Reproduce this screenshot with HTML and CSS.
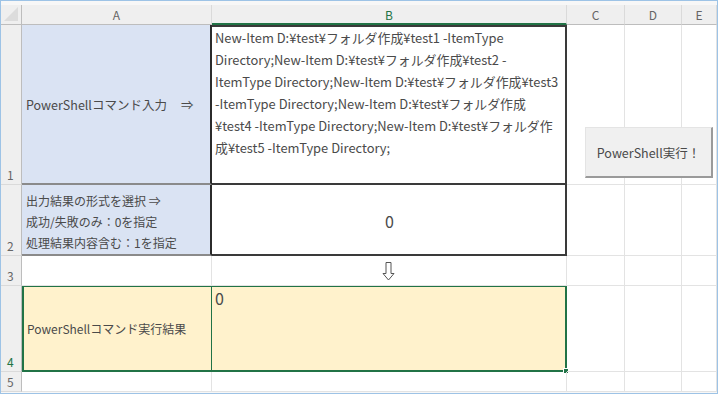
FILE: index.html
```html
<!DOCTYPE html>
<html lang="ja">
<head>
    <meta charset="UTF-8">
    <title>PowerShell実行シート</title>
    <link rel="stylesheet" href="styles.css">
</head>
<body>
    <div class="window">
        <div class="sheet">
            <!-- header row -->
            <div class="hd corner"><span class="tri"></span></div>
            <div class="hd col">A</div>
            <div class="hd col col-sel">B</div>
            <div class="hd col">C</div>
            <div class="hd col">D</div>
            <div class="hd col">E</div>

            <!-- row 1 -->
            <div class="hd row">1</div>
            <div class="cell blue a1 mid">PowerShellコマンド入力<span class="gap"></span>⇒</div>
            <div class="cell box b1">
                <div class="cmd">
                    <p>New-Item D:¥test¥フォルダ作成¥test1 -ItemType</p>
                    <p>Directory;New-Item D:¥test¥フォルダ作成¥test2 -</p>
                    <p>ItemType Directory;New-Item D:¥test¥フォルダ作成¥test3</p>
                    <p>-ItemType Directory;New-Item D:¥test¥フォルダ作成</p>
                    <p>¥test4 -ItemType Directory;New-Item D:¥test¥フォルダ作</p>
                    <p>成¥test5 -ItemType Directory;</p>
                </div>
            </div>
            <div class="cell"></div>
            <div class="cell"></div>
            <div class="cell"></div>

            <!-- row 2 -->
            <div class="hd row">2</div>
            <div class="cell blue a2">
                <p>出力結果の形式を選択 ⇒</p>
                <p>成功/失敗のみ：0を指定</p>
                <p>処理結果内容含む：1を指定</p>
            </div>
            <div class="cell box b2">0</div>
            <div class="cell"></div>
            <div class="cell"></div>
            <div class="cell"></div>

            <!-- row 3 -->
            <div class="hd row">3</div>
            <div class="cell"></div>
            <div class="cell arrow">
                <svg width="13" height="19" viewBox="0 0 13 19">
                    <path d="M4 0.5 H9 V11.5 H12 L6.5 18 L1 11.5 H4 Z" fill="none" stroke="#555" stroke-width="1"/>
                </svg>
            </div>
            <div class="cell"></div>
            <div class="cell"></div>
            <div class="cell"></div>

            <!-- row 4 -->
            <div class="hd row row-sel">4</div>
            <div class="cell yellow a4 mid">PowerShellコマンド実行結果</div>
            <div class="cell yellow b4">0<span class="handle"></span></div>
            <div class="cell"></div>
            <div class="cell"></div>
            <div class="cell"></div>

            <!-- row 5 -->
            <div class="hd row">5</div>
            <div class="cell"></div>
            <div class="cell"></div>
            <div class="cell"></div>
            <div class="cell"></div>
            <div class="cell"></div>
        </div>
        <button class="run-btn">PowerShell実行！</button>
    </div>
</body>
</html>
```

FILE: styles.css
```css
* {
    margin: 0;
    padding: 0;
    box-sizing: border-box;
}
body {
    background: #fff;
    font-family: "Noto Sans CJK JP", "Noto Sans", sans-serif;
    color: #4a4a4a;
}
.window {
    position: relative;
    width: 718px;
    height: 394px;
    border: 1px solid #9dc3e6;
    padding-top: 4px;
    background: #f7f7f7;
    overflow: hidden;
}
.sheet {
    display: grid;
    grid-template-columns: 21px 190px 355px 58px 57px 35px;
    grid-template-rows: 20px 160px 71px 30px 86px 20px;
    background: #fff;
}
.hd {
    background: #efefef;
    color: #666;
    font-size: 12px;
    display: flex;
    border-right: 1px solid #dadada;
    border-bottom: 1px solid #dadada;
}
.hd.col {
    align-items: center;
    justify-content: center;
    border-bottom: 1px solid #bdbdbd;
}
.col-sel {
    color: #217346;
    border-bottom: 2px solid #217346 !important;
}
.hd.row {
    align-items: flex-end;
    padding-left: 6px;
    padding-bottom: 1px;
    border-right: 1px solid #bdbdbd;
    line-height: 16px;
}
.row-sel {
    color: #217346;
}
.corner {
    border-bottom: 1px solid #bdbdbd;
    border-right: 1px solid #bdbdbd;
    position: relative;
}
.tri {
    position: absolute;
    right: 3px;
    bottom: 3px;
    width: 0;
    height: 0;
    border-left: 14px solid transparent;
    border-bottom: 14px solid #dcdcdc;
}
.cell {
    border-right: 1px solid #e3e3e3;
    border-bottom: 1px solid #e3e3e3;
    font-size: 12.5px;
    position: relative;
}
.blue {
    background: #dae3f3;
}
.yellow {
    background: #fff2cc;
}
.mid {
    display: flex;
    align-items: center;
    padding-left: 4px;
}
.a1 {
    border-bottom: 2px solid #8a8a8a;
    border-right: 2px solid #2b2b2b;
}
.gap {
    display: inline-block;
    width: 14px;
}
.b1 {
    border-top: 1px solid #217346;
}
.box {
    border: 2px solid #3a3a3a;
    border-left: none;
}
.b2 {
    border-top: none;
    display: flex;
    align-items: center;
    padding-left: 173px;
    font-size: 16px;
    padding-top: 2px;
}
.cmd {
    padding: 0 0 0 3px;
    font-size: 12.9px;
    line-height: 22px;
    white-space: nowrap;
}
.a2 {
    border-right: 2px solid #2b2b2b;
    border-bottom: 2px solid #8a8a8a;
    padding: 5px 0 0 4px;
    font-size: 12px;
    line-height: 21px;
}
.arrow {
    display: flex;
    justify-content: center;
    align-items: center;
    padding-right: 2px;
    padding-top: 2px;
}
.a4 {
    border: 2px solid #217346;
    border-top: 1px solid #217346;
    border-right: 1px solid #217346;
    padding-left: 3px;
    font-size: 12px;
}
.b4 {
    border: 2px solid #217346;
    border-top: 1px solid #217346;
    border-left: none;
    font-size: 16px;
    padding: 0 0 0 3px;
    line-height: 22px;
}
.handle {
    position: absolute;
    right: -4px;
    bottom: -4px;
    width: 6px;
    height: 6px;
    background: #217346;
    border: 1px solid #fff;
}
.run-btn {
    position: absolute;
    left: 584px;
    top: 126px;
    width: 128px;
    height: 51px;
    background: #f0f0f0;
    border: 1px solid #e4e4e4;
    border-right: 2px solid #9a9a9a;
    border-bottom: 2px solid #9a9a9a;
    font-family: "Noto Sans CJK JP", sans-serif;
    font-size: 12.5px;
    color: #4a4a4a;
}
```
